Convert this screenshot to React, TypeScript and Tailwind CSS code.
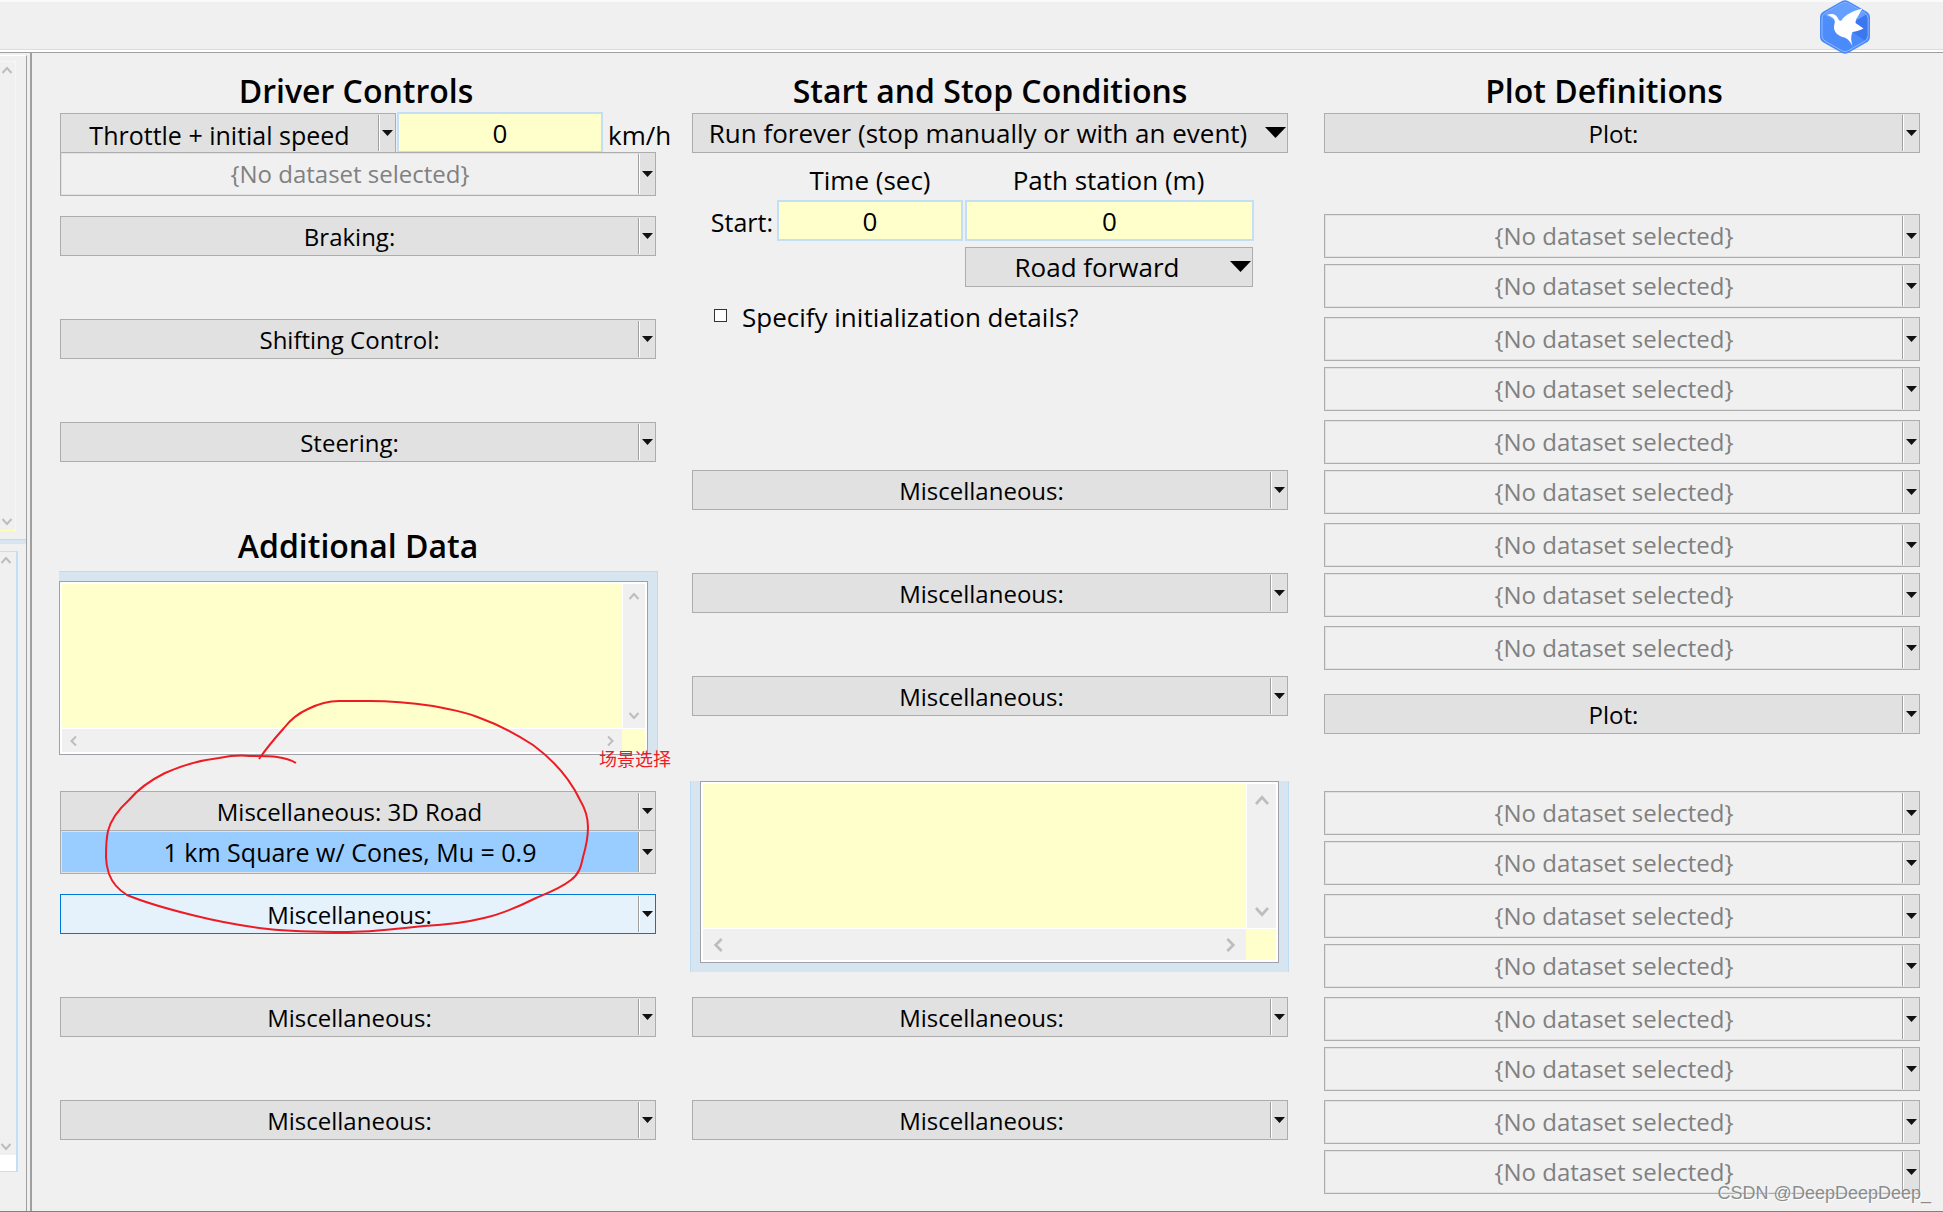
import React from "react";

function CaretDown({ large = false }: { large?: boolean }) {
  return large ? (
    <svg className="h-[11px] w-[21px]" viewBox="0 0 21 11" aria-hidden="true">
      <path d="M0 0H21L10.5 11Z" fill="#000" />
    </svg>
  ) : (
    <svg className="h-[6px] w-[11px]" viewBox="0 0 11 6" aria-hidden="true">
      <path d="M0 0H11L5.5 6Z" fill="#111" />
    </svg>
  );
}

function Chevron({ dir, large = false }: { dir: "up" | "down" | "left" | "right"; large?: boolean }) {
  const d = {
    up: "M1.5 9L6 4L10.5 9",
    down: "M1.5 3L6 8L10.5 3",
    left: "M8 1.5L3.5 6L8 10.5",
    right: "M4 1.5L8.5 6L4 10.5",
  }[dir];
  return (
    <svg
      className={large ? "h-4 w-4" : "h-3 w-3"}
      viewBox="0 0 12 12"
      fill="none"
      stroke="#bdbdbd"
      strokeWidth="2"
      aria-hidden="true"
    >
      <path d={d} />
    </svg>
  );
}

function ArrowButton({ label, className }: { label: string; className: string }) {
  return (
    <button
      aria-label={label}
      className={`flex w-4 shrink-0 justify-center border-l border-white bg-transparent ${className}`}
    >
      <CaretDown />
    </button>
  );
}

function LinkButton({
  children,
  active = false,
  className = "w-full text-2xl",
}: {
  children: string;
  active?: boolean;
  className?: string;
}) {
  return (
    <div
      className={`flex h-10 border ${active ? "border-[#0078d7] bg-[#e5f1fb]" : "border-[#adadad] bg-[#e1e1e1]"} ${className}`}
    >
      <button className="my-px min-w-0 flex-1 border-r border-[#a0a0a0] pt-0.5 text-center whitespace-nowrap">
        {children}
      </button>
      <ArrowButton label={`${children} menu`} className="my-px pt-[15px]" />
    </div>
  );
}

function Dataset({ text, flush = false }: { text?: string; flush?: boolean }) {
  return (
    <div className={`flex h-11 w-full border border-[#adadad] bg-[#e1e1e1] py-px pl-px ${flush ? "-mt-px" : ""}`}>
      <button
        className={`min-w-0 flex-1 border-r border-[#a0a0a0] text-center whitespace-nowrap ${
          text ? "bg-[#99ccff] text-[25px] text-black" : "bg-[#f0f0f0] text-2xl text-[#808080]"
        }`}
      >
        {text ?? "{No dataset selected}"}
      </button>
      <ArrowButton label="Choose dataset" className="pt-[17px]" />
    </div>
  );
}

function DropSelect({ value, className = "" }: { value: string; className?: string }) {
  return (
    <div className={`relative h-10 border border-[#adadad] bg-[#e1e1e1] ${className}`}>
      <select
        aria-label={value}
        className="h-full w-full appearance-none bg-transparent pr-6 text-center whitespace-nowrap outline-none [text-align-last:center]"
      >
        <option>{value}</option>
      </select>
      <span className="pointer-events-none absolute top-[13px] right-px">
        <CaretDown large />
      </span>
    </div>
  );
}

function NumberBox({ id, className }: { id: string; className: string }) {
  return (
    <input
      id={id}
      defaultValue="0"
      className={`min-w-0 border-2 border-[#c3dff5] bg-[#ffffcc] text-center outline-none ${className}`}
    />
  );
}

function Heading({ children, className = "" }: { children: string; className?: string }) {
  return (
    <h2 className={`h-10 text-center text-[32px] leading-9 font-semibold whitespace-nowrap ${className}`}>
      {children}
    </h2>
  );
}

function NotesBox({ label, wide = false }: { label: string; wide?: boolean }) {
  return (
    <div className="flex h-full w-full flex-col border border-[#a0a0a8] bg-white p-0.5">
      <div className="flex min-h-0 flex-1">
        <textarea aria-label={label} className="min-w-0 flex-1 resize-none bg-[#ffffcc] outline-none" />
        <div
          className={`flex shrink-0 flex-col items-center justify-between border-l border-white bg-[#f0f0f0] ${
            wide ? "w-[30px] py-2" : "w-[23px] py-1.5"
          }`}
        >
          <Chevron dir="up" large={wide} />
          <Chevron dir="down" large={wide} />
        </div>
      </div>
      <div className={`flex shrink-0 border-t border-white bg-[#ffffcc] ${wide ? "h-[32px]" : "h-[24px]"}`}>
        <div className={`flex flex-1 items-center justify-between bg-[#f0f0f0] ${wide ? "px-2" : "px-1.5"}`}>
          <Chevron dir="left" large={wide} />
          <Chevron dir="right" large={wide} />
        </div>
        <div className={wide ? "w-[30px]" : "w-[23px]"} />
      </div>
    </div>
  );
}

function DatasetPairs({ count }: { count: number }) {
  return (
    <div className="flex flex-col gap-[9px]">
      {Array.from({ length: Math.ceil(count / 2) }, (_, i) => (
        <div key={i} className="flex flex-col gap-1.5">
          <Dataset />
          {i * 2 + 1 < count && <Dataset />}
        </div>
      ))}
    </div>
  );
}

function Logo() {
  return (
    <svg className="h-[54px] w-[50px]" viewBox="0 0 50 54" role="img" aria-label="Bird logo">
      <defs>
        <linearGradient id="hex" x1="0" y1="0" x2="1" y2="1">
          <stop offset="0" stopColor="#4f90fb" />
          <stop offset="1" stopColor="#4a88fa" />
        </linearGradient>
      </defs>
      <path
        d="M21.5 1.2Q25 -.8 28.5 1.2L46.5 11.5Q50 13.5 50 17.5V36.5Q50 40.5 46.5 42.5L28.5 52.8Q25 54.8 21.5 52.8L3.5 42.5Q0 40.5 0 36.5V17.5Q0 13.5 3.5 11.5Z"
        fill="#4a8bfb"
      />
      <path
        d="M22 3.2Q25 1.5 28 3.2L45 13Q48 14.8 48 18V36Q48 39.2 45 41L28 50.8Q25 52.5 22 50.8L5 41Q2 39.2 2 36V18Q2 14.8 5 13Z"
        fill="url(#hex)"
        stroke="#8fb8ff"
        strokeWidth="1"
      />
      <path d="M25 27L46 14.500L47.500 18V36L45 40.500Z" fill="#3b78f0" />
      <path d="M25 27L4 14.500L22 3.800Q25 2.200 28 3.800L46 14.500Z" fill="#66a0ff" />
      <path
        d="M7 15C9 14.300 11.500 13.800 13.500 14.300C16 15 17.500 17 18.500 19.500C19.500 21 20.500 21 21.500 20.500C25 14.500 33 11 42.500 8.500C40 12 38.500 16 36 19.500L35.500 23L43.500 28.500C40 30.500 36 31.500 32.500 32C30.500 36 31 41 32.500 46C30.500 42 28 38.500 24.500 37.500C19 36.500 14.500 33 14 28C13.700 25 15.500 22.500 14.500 20C13.500 17.500 10 16 7 15Z"
        fill="#fff"
      />
    </svg>
  );
}

function SidePane() {
  return (
    <aside className="flex w-8 shrink-0 border-r-2 border-[#a0a0a0] pt-0.5 pr-[3px]">
      <div className="flex flex-1 flex-col border-t border-r border-t-white border-r-[#a0a0a0]">
        <div className="mt-[5px] flex h-[470px] w-4 flex-col items-center justify-between border-t border-r border-b border-[#ffffb0] py-0.5 pr-0.5">
          <Chevron dir="up" />
          <Chevron dir="down" />
        </div>
        <div className="mt-2 h-[5px] border-t border-[#bcdcf4] bg-[#d7e5f0]" />
        <div className="mt-[7px] flex h-[621px] w-[18px] flex-col border-y border-r-2 border-[#c3dff5]">
          <div className="flex flex-1 flex-col items-center justify-between py-0.5 pr-1">
            <Chevron dir="up" />
            <Chevron dir="down" />
          </div>
          <div className="h-4 bg-white" />
        </div>
      </div>
    </aside>
  );
}

function Annotation() {
  return (
    <>
      <svg
        className="pointer-events-none absolute top-[640px] left-[68px] h-[244px] w-[496px]"
        viewBox="100 693 496 244"
        fill="none"
        stroke="#ed1c24"
        strokeWidth="2"
        aria-hidden="true"
      >
        <path d="M259 759C266 749 276 737 284 728C291 719 299 713 308 709C318 704 328 701 339 701H370C392 701 412 703 433 706C450 709 466 712 480 718C502 726 518 735 533 745C556 762 570 779 580 800C586 810 588 818 588 827C588 838 586 847 583 857C581 867 579 874 571 880C561 888 548 893 536 898C518 907 502 914 484 918C464 923 444 925 424 926C398 929 374 932 348 932C320 932 294 932 268 929C242 926 216 921 192 915C168 909 146 903 127 895C117 889 112 882 109 874C107 868 106 862 106 857C106 847 106 840 108 831C111 819 119 809 129 800C139 788 151 780 165 773C183 765 201 760 219 758C229 756 240 755 250 756C260 756 270 756 277 757C285 758 291 760 296 763" />
      </svg>
      <span className="absolute top-[692px] left-[567px] text-lg leading-7 whitespace-nowrap text-[#ed1c24]">
        场景选择
      </span>
    </>
  );
}

export default function App() {
  return (
    <div className="relative flex min-h-screen flex-col overflow-hidden border-b border-[#808080] bg-[#f0f0f0] font-['Open_Sans','Noto_Sans_CJK_SC',sans-serif] text-[26px] leading-9 text-black">
      <header className="flex h-[53px] justify-end border-t-2 border-b border-t-[#fafafa] border-b-[#a0a0a0] pr-[73px]">
        <div className="absolute inset-x-0 top-[49px] h-[3px] border-t border-[#dcdcdc] bg-white" />
        <div className="relative -mt-0.5">
          <Logo />
        </div>
      </header>

      <div className="flex flex-1">
        <SidePane />
        <main className="relative grid flex-1 grid-cols-3 gap-9 pt-5 pr-[23px] pb-4 pl-7">
          <section className="flex min-w-0 flex-col">
            <Heading className="pr-1">Driver Controls</Heading>
            <div className="flex h-10 gap-px">
              <LinkButton className="w-[336px] shrink-0 text-[25px]">Throttle + initial speed</LinkButton>
              <NumberBox id="speed" className="-mt-px h-[41px] w-[206px] shrink-0" />
              <label htmlFor="speed" className="pt-1 pl-1 whitespace-nowrap">
                km/h
              </label>
            </div>
            <Dataset flush />
            <div className="mt-5 flex flex-col gap-[63px]">
              <LinkButton>Braking:</LinkButton>
              <LinkButton>Shifting Control:</LinkButton>
              <LinkButton>Steering:</LinkButton>
            </div>
            <div className="mt-[66px]">
              <Heading>Additional Data</Heading>
            </div>
            <div className="-mr-0.5 -ml-px mt-[3px] h-[184px] border-t border-r border-[#bcdcf4] bg-[#d7e5f0] pt-[9px] pr-[9px]">
              <NotesBox label="Additional data" />
            </div>
            <div className="mt-9">
              <LinkButton>Miscellaneous: 3D Road</LinkButton>
              <Dataset flush text="1 km Square w/ Cones, Mu = 0.9" />
            </div>
            <div className="mt-5 flex flex-col gap-[63px]">
              <LinkButton active>Miscellaneous:</LinkButton>
              <LinkButton>Miscellaneous:</LinkButton>
              <LinkButton>Miscellaneous:</LinkButton>
            </div>
          </section>

          <section className="flex min-w-0 flex-col">
            <Heading>Start and Stop Conditions</Heading>
            <DropSelect value="Run forever (stop manually or with an event)" />
            <div className="mt-[9px] grid grid-cols-[85px_186px_291px] gap-y-0.5">
              <span />
              <label htmlFor="time" className="text-center">
                Time (sec)
              </label>
              <label htmlFor="station" className="text-center">
                Path station (m)
              </label>
              <span className="pt-1 pr-1 text-right text-[25px]">Start:</span>
              <NumberBox id="time" className="h-[41px]" />
              <NumberBox id="station" className="ml-0.5 h-[41px]" />
              <span />
              <span />
              <DropSelect value="Road forward" className="mt-1 mr-px ml-0.5" />
            </div>
            <label className="mt-3 flex h-9 items-center pl-[22px]">
              <input
                type="checkbox"
                className="mr-[15px] mb-1 h-[13px] w-[13px] appearance-none border border-[#333] bg-white"
              />
              Specify initialization details?
            </label>
            <div className="mt-[135px] flex flex-col gap-[63px]">
              <LinkButton>Miscellaneous:</LinkButton>
              <LinkButton>Miscellaneous:</LinkButton>
              <LinkButton>Miscellaneous:</LinkButton>
            </div>
            <div className="-mr-px -ml-0.5 mt-[65px] h-[191px] border-x border-[#bcdcf4] bg-[#d7e5f0] px-[9px] pb-[9px]">
              <NotesBox label="Notes" wide />
            </div>
            <div className="mt-[25px] flex flex-col gap-[63px]">
              <LinkButton>Miscellaneous:</LinkButton>
              <LinkButton>Miscellaneous:</LinkButton>
            </div>
          </section>

          <section className="flex min-w-0 flex-col">
            <Heading className="pr-9">Plot Definitions</Heading>
            <LinkButton>Plot:</LinkButton>
            <div className="mt-[61px]">
              <DatasetPairs count={9} />
            </div>
            <div className="mt-6">
              <LinkButton>Plot:</LinkButton>
            </div>
            <div className="mt-[57px]">
              <DatasetPairs count={8} />
            </div>
          </section>

          <Annotation />
        </main>
      </div>
      <span className="pointer-events-none absolute right-3 bottom-1.5 font-['Liberation_Sans',sans-serif] text-lg leading-6 text-[#8c8c8c] [text-shadow:1px_1px_1px_#fff]">
        CSDN @DeepDeepDeep_
      </span>
    </div>
  );
}
